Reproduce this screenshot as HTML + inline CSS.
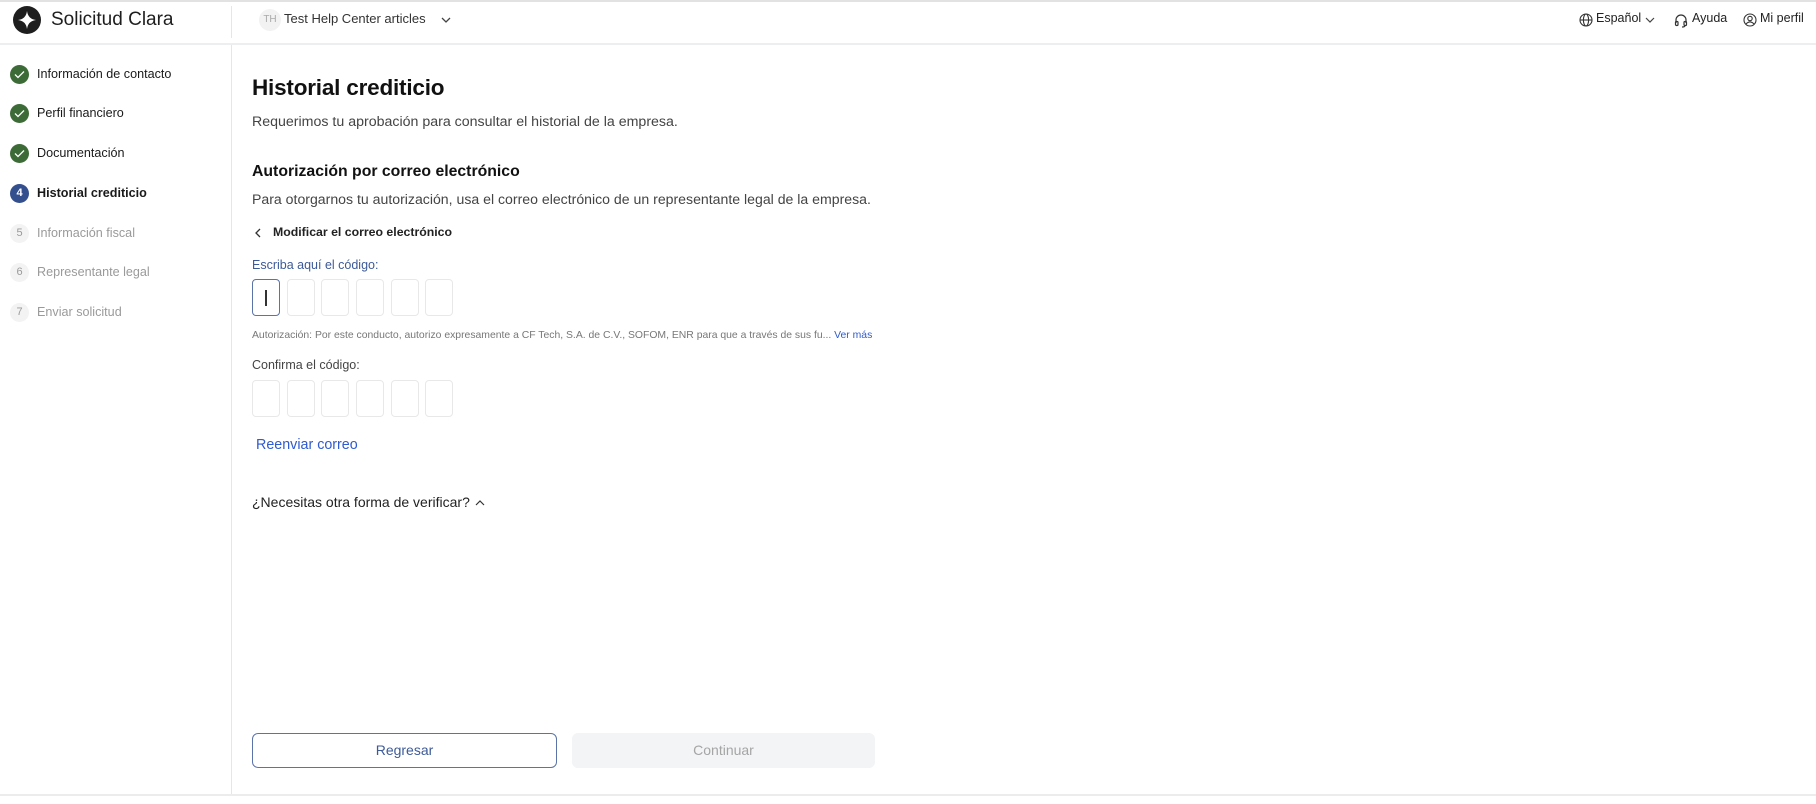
<!DOCTYPE html>
<html><head><meta charset="utf-8">
<style>
*{box-sizing:border-box;margin:0;padding:0}
body{width:1816px;height:804px;overflow:hidden;background:#fff;font-family:"Liberation Sans",sans-serif;color:#1a1a1a;position:relative}
.abs{position:absolute;white-space:nowrap}
.hdr{position:absolute;left:0;top:0;width:1816px;height:45px;border-top:2px solid #e2e2e2;border-bottom:2px solid #eceef0}
.side{position:absolute;left:231px;top:45px;width:1px;height:749px;background:#e6e6e6}
.hsep{position:absolute;left:231px;top:6px;width:1px;height:32px;background:#e6e6e6}
.step{position:absolute;left:10px;height:20px;display:flex;align-items:center;font-size:12.6px}
.c{width:19px;height:19px;border-radius:50%;display:flex;align-items:center;justify-content:center;margin-right:8px;font-size:11px}
.g{background:#3d6b37}
.b{background:#344f8e;color:#fff;font-weight:bold}
.n{background:#f3f3f3;color:#9a9a9a}
.box{position:absolute;width:28px;height:37px;border:1.5px solid #e8e8e8;border-radius:4px}
.bot{position:absolute;left:0;top:794px;width:1816px;height:2px;background:#ececec}
</style></head><body>
<div class="hdr"></div>
<div class="hsep"></div>
<svg class="abs" style="left:13px;top:6px" width="28" height="28" viewBox="0 0 28 28"><circle cx="14" cy="14" r="14" fill="#1e1e1e"/><path d="M14 5 Q15 13 23 14 Q15 15 14 23 Q13 15 5 14 Q13 13 14 5Z" fill="#fff"/></svg>
<div class="abs" style="left:51px;top:9px;font-size:19px;color:#1e1e1e">Solicitud Clara</div>
<div class="abs" style="left:259px;top:9px;width:22px;height:22px;border-radius:50%;background:#f2f2f2;color:#aaa;font-size:10px;line-height:22px;text-align:center">TH</div>
<div class="abs" style="left:284px;top:11px;font-size:13px;color:#333">Test Help Center articles</div>
<svg class="abs" style="left:440px;top:14px" width="12" height="12" viewBox="0 0 12 12"><path d="M2 4l4 4 4-4" fill="none" stroke="#444" stroke-width="1.3"/></svg>
<svg class="abs" style="left:1579px;top:13px" width="14" height="14" viewBox="0 0 14 14" fill="none" stroke="#333" stroke-width="1.1"><circle cx="7" cy="7" r="6"/><ellipse cx="7" cy="7" rx="2.6" ry="6"/><path d="M1 7h12"/></svg>
<div class="abs" style="left:1596px;top:11px;font-size:12.5px;color:#222">Español</div>
<svg class="abs" style="left:1645px;top:15px" width="10" height="10" viewBox="0 0 10 10"><path d="M1 3l4 4 4-4" fill="none" stroke="#444" stroke-width="1.2"/></svg>
<svg class="abs" style="left:1674px;top:13px" width="14" height="15" viewBox="0 0 14 15" fill="none" stroke="#333" stroke-width="1.2"><path d="M2 10V7a5 5 0 0 1 10 0v3"/><rect x="1.5" y="8.5" width="2.5" height="4" rx="1"/><rect x="10" y="8.5" width="2.5" height="4" rx="1"/><path d="M11 12.5q0 1.5-3 1.5"/></svg>
<div class="abs" style="left:1692px;top:11px;font-size:12.5px;color:#222">Ayuda</div>
<svg class="abs" style="left:1743px;top:13px" width="14" height="14" viewBox="0 0 14 14" fill="none" stroke="#333" stroke-width="1.1"><circle cx="7" cy="7" r="6"/><circle cx="7" cy="5.5" r="2.2"/><path d="M3 11q4-4 8 0"/></svg>
<div class="abs" style="left:1760px;top:11px;font-size:12.5px;color:#222">Mi perfil</div>
<div class="side"></div>

<div class="step" style="top:64px"><div class="c g"><svg width="11" height="9" viewBox="0 0 11 9"><path d="M1 4.5l3 3 6-6" fill="none" stroke="#fff" stroke-width="1.3"/></svg></div>Información de contacto</div>
<div class="step" style="top:103px"><div class="c g"><svg width="11" height="9" viewBox="0 0 11 9"><path d="M1 4.5l3 3 6-6" fill="none" stroke="#fff" stroke-width="1.3"/></svg></div>Perfil financiero</div>
<div class="step" style="top:143px"><div class="c g"><svg width="11" height="9" viewBox="0 0 11 9"><path d="M1 4.5l3 3 6-6" fill="none" stroke="#fff" stroke-width="1.3"/></svg></div>Documentación</div>
<div class="step" style="top:183px;font-weight:bold"><div class="c b">4</div>Historial crediticio</div>
<div class="step" style="top:223px;color:#9a9a9a"><div class="c n">5</div>Información fiscal</div>
<div class="step" style="top:262px;color:#9a9a9a"><div class="c n">6</div>Representante legal</div>
<div class="step" style="top:302px;color:#9a9a9a"><div class="c n">7</div>Enviar solicitud</div>

<div class="abs" style="left:252px;top:75px;font-size:22.5px;font-weight:bold;color:#111;letter-spacing:-0.2px">Historial crediticio</div>
<div class="abs" style="left:252px;top:114px;font-size:14.2px;color:#444">Requerimos tu aprobación para consultar el historial de la empresa.</div>
<div class="abs" style="left:252px;top:163px;font-size:15.8px;font-weight:bold;color:#111">Autorización por correo electrónico</div>
<div class="abs" style="left:252px;top:191px;font-size:14.1px;color:#444">Para otorgarnos tu autorización, usa el correo electrónico de un representante legal de la empresa.</div>
<svg class="abs" style="left:253px;top:227px" width="10" height="12" viewBox="0 0 10 12"><path d="M7 2L3 6l4 4" fill="none" stroke="#333" stroke-width="1.3"/></svg>
<div class="abs" style="left:273px;top:225px;font-size:12.3px;font-weight:bold;color:#222">Modificar el correo electrónico</div>
<div class="abs" style="left:252px;top:258px;font-size:12.5px;color:#3d5a98">Escriba aquí el código:</div>
<div class="box" style="left:252px;top:279px;border-color:#5b73a8"><div style="position:absolute;left:12px;top:10px;width:1.5px;height:16px;background:#333"></div></div>
<div class="box" style="left:287px;top:279px"></div>
<div class="box" style="left:321px;top:279px"></div>
<div class="box" style="left:356px;top:279px"></div>
<div class="box" style="left:391px;top:279px"></div>
<div class="box" style="left:425px;top:279px"></div>
<div class="abs" style="left:252px;top:330px;font-size:10.4px;color:#777">Autorización: Por este conducto, autorizo expresamente a CF Tech, S.A. de C.V., SOFOM, ENR para que a través de sus fu... <span style="color:#2f5bd0">Ver más</span></div>
<div class="abs" style="left:252px;top:358px;font-size:12.5px;color:#444">Confirma el código:</div>
<div class="box" style="left:252px;top:380px"></div>
<div class="box" style="left:287px;top:380px"></div>
<div class="box" style="left:321px;top:380px"></div>
<div class="box" style="left:356px;top:380px"></div>
<div class="box" style="left:391px;top:380px"></div>
<div class="box" style="left:425px;top:380px"></div>
<div class="abs" style="left:256px;top:437px;font-size:14.3px;color:#2f5bd0">Reenviar correo</div>
<div class="abs" style="left:252px;top:494px;font-size:14px;color:#222">¿Necesitas otra forma de verificar?</div>
<svg class="abs" style="left:475px;top:498px" width="10" height="10" viewBox="0 0 10 10"><path d="M1 7l4-4 4 4" fill="none" stroke="#333" stroke-width="1.2"/></svg>

<div class="abs" style="left:252px;top:733px;width:305px;height:35px;border:1.5px solid #5b73a8;border-radius:6px;text-align:center;line-height:32px;font-size:14px;color:#3d5a98">Regresar</div>
<div class="abs" style="left:572px;top:733px;width:303px;height:35px;background:#f3f4f6;border-radius:6px;text-align:center;line-height:35px;font-size:14px;color:#a5a5a5">Continuar</div>
<div class="bot"></div>
</body></html>
